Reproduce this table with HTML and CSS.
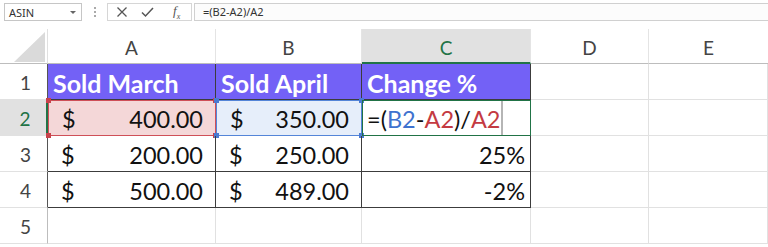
FILE: index.html
```html
<!DOCTYPE html>
<html>
<head>
<meta charset="utf-8">
<link rel="stylesheet" href="styles.css">
</head>
<body>
<div class="toolbar">
  <div class="namebox"><span>ASIN</span><span class="arrow"></span></div>
  <div class="grip"><i></i><i></i><i></i></div>
  <div class="fxgroup">
    <svg class="ic" width="12" height="12" viewBox="0 0 12 12"><path d="M1.5 1.5 L10.5 10.5 M10.5 1.5 L1.5 10.5" stroke="#555" stroke-width="1.3" fill="none"/></svg>
    <svg class="ic" width="13" height="12" viewBox="0 0 13 12"><path d="M1 6.5 L4.5 10 L12 2" stroke="#555" stroke-width="1.5" fill="none"/></svg>
    <span class="fx">f<sub>x</sub></span>
  </div>
  <div class="formula">=(B2-A2)/A2</div>
</div>
<div class="sheet">
  <div class="corner"><svg width="31" height="30" viewBox="0 0 31 30"><polygon points="31,0 31,30 0,30" fill="#dadada"/></svg></div>
  <div class="ch">A</div>
  <div class="ch">B</div>
  <div class="ch sel">C</div>
  <div class="ch">D</div>
  <div class="ch last">E</div>

  <div class="rh dk">1</div>
  <div class="c hd dk">Sold March</div>
  <div class="c hd dk">Sold April</div>
  <div class="c hd dk">Change %</div>
  <div class="c"></div>
  <div class="c"></div>

  <div class="rh sel">2</div>
  <div class="c money red"><span>$</span><span>400.00</span><b class="h tl"></b><b class="h tr"></b><b class="h bl"></b><b class="h br"></b></div>
  <div class="c money blue"><span>$</span><span>350.00</span><b class="h tl"></b><b class="h tr"></b><b class="h bl"></b><b class="h br"></b></div>
  <div class="c edit"><span>=(</span><span class="rb">B2</span><span>-</span><span class="rr">A2</span><span>)/</span><span class="rr">A2</span><span class="caret"></span></div>
  <div class="c"></div>
  <div class="c"></div>

  <div class="rh dk">3</div>
  <div class="c money dk"><span>$</span><span>200.00</span></div>
  <div class="c money dk"><span>$</span><span>250.00</span></div>
  <div class="c num dk">25%</div>
  <div class="c"></div>
  <div class="c"></div>

  <div class="rh dk">4</div>
  <div class="c money dk"><span>$</span><span>500.00</span></div>
  <div class="c money dk"><span>$</span><span>489.00</span></div>
  <div class="c num dk">-2%</div>
  <div class="c"></div>
  <div class="c"></div>

  <div class="rh">5</div>
  <div class="c"></div>
  <div class="c"></div>
  <div class="c"></div>
  <div class="c"></div>
  <div class="c"></div>
</div>
</body>
</html>
```
FILE: styles.css
```css
* { box-sizing: border-box; }
html, body { margin: 0; padding: 0; background: #fff; }
body { width: 768px; height: 247px; overflow: hidden; font-family: Lato, "Noto Sans", sans-serif; }

.toolbar { height: 22px; display: flex; align-items: center; padding-top: 3px; padding-bottom: 1px; font-family: "Noto Sans", sans-serif; font-size: 11px; color: #333; }
.namebox { margin-left: 4px; width: 78px; height: 18px; border: 1px solid #c6c6c6; display: flex; align-items: center; justify-content: space-between; padding: 0 5px 0 4px; }
.arrow { width: 0; height: 0; border-left: 3px solid transparent; border-right: 3px solid transparent; border-top: 3px solid #666; }
.grip { width: 25px; display: flex; flex-direction: column; align-items: center; gap: 2px; }
.grip i { width: 2px; height: 2px; background: #aaa; display: block; }
.fxgroup { width: 85px; height: 18px; border: 1px solid #d6d6d6; display: flex; align-items: center; padding-left: 8px; gap: 13px; }
.fx { font-family: "Liberation Serif", serif; font-style: italic; font-size: 13px; color: #555; margin-left: 6px; }
.fx sub { font-size: 8px; }
.formula { flex: 1; margin-left: 2px; height: 18px; border-top: 1px solid #d0d0d0; border-bottom: 1px solid #d0d0d0; border-left: 1px solid #d0d0d0; background: #fcfcfc; padding-left: 8px; line-height: 16px; }

.sheet { margin-top: 7px; display: grid; grid-template-columns: 48px 168px 146px 169px 118px 1fr; grid-template-rows: 35px repeat(5, 36px); }
.corner { border-right: 1px solid #e0e0e0; border-bottom: 1px solid #bdbdbd; display: flex; align-items: flex-end; justify-content: flex-end; padding: 0 2px 1px 0; }
.ch { border-right: 1px solid #e4e4e4; border-bottom: 1px solid #bdbdbd; color: #444; font-size: 19px; display: flex; align-items: center; justify-content: center; padding-top: 2px; }
.ch.sel { background: #e1e1e1; color: #217346; border-bottom: 2px solid #217346; padding-top: 3px; }
.ch.last { border-right: none; }
.rh { border-right: 1px solid #bdbdbd; border-bottom: 1px solid #e1e1e1; color: #444; font-size: 19px; display: flex; align-items: center; justify-content: center; padding-left: 4px; padding-top: 2px; }
.rh.sel { background: #e1e1e1; color: #217346; border-right: 2px solid #217346; }
.rh.dk { border-right-color: #555; }

.c { position: relative; border-right: 1px solid #e1e1e1; border-bottom: 1px solid #e1e1e1; font-size: 23.5px; color: #111; display: flex; align-items: center; padding-top: 2px; }
.c.dk { border-right-color: #3c3c3c; border-bottom-color: #3c3c3c; }
.hd { background: #7361f6; color: #fff; font-weight: 700; font-size: 25px; padding-left: 5px; }
.money { justify-content: space-between; padding: 2px 12px 0 13px; }
.num { justify-content: flex-end; padding-right: 5px; }
.red { background: #f4d7d8; border: 1px solid #cf4f58; }
.blue { background: #e6eefa; border: 1px solid #5485d8; }
.edit { border: 1px solid #217346; padding-left: 4px; }
.rb { color: #3f72cf; }
.rr { color: #c43a42; }
.caret { display: block; width: 2px; height: 34px; background: #b5b5b5; margin-left: 1px; margin-top: -2px; }
.h { position: absolute; width: 5px; height: 5px; }
.red .h { background: #c8424b; }
.blue .h { background: #4a7ad2; }
.tl { left: -3px; top: -3px; }
.tr { right: -3px; top: -3px; }
.bl { left: -3px; bottom: -3px; }
.br { right: -3px; bottom: -3px; }
```
